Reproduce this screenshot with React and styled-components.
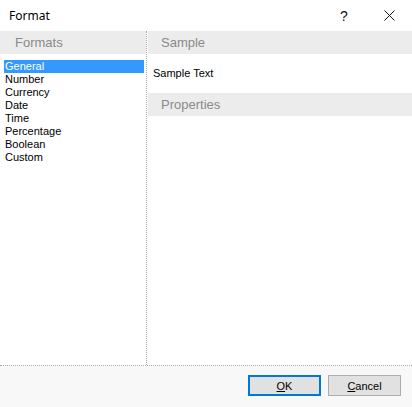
import React from "react";
import styled, { createGlobalStyle } from "styled-components";

const formats = ["General", "Number", "Currency", "Date", "Time", "Percentage", "Boolean", "Custom"];

const App = () => {
	return (
		<>
			<GlobalStyle />
			<Window>
				<TitleBar>
					<Title>Format</Title>
					<TitleButton>?</TitleButton>
					<TitleButton>
						<svg width="11" height="11" viewBox="0 0 11 11">
							<path d="M0.5 0.5 L10.5 10.5 M10.5 0.5 L0.5 10.5" stroke="#111" strokeWidth="1" />
						</svg>
					</TitleButton>
				</TitleBar>
				<Main>
					<LeftPane>
						<Header>Formats</Header>
						<FormatList>
							{formats.map((f, i) => (
								<FormatItem key={f} $selected={i === 0}>
									{f}
								</FormatItem>
							))}
						</FormatList>
					</LeftPane>
					<RightPane>
						<Header $right>Sample</Header>
						<SampleArea>Sample Text</SampleArea>
						<Header $right>Properties</Header>
					</RightPane>
				</Main>
				<Footer>
					<Button $default>
						<u>O</u>K
					</Button>
					<Button>
						<u>C</u>ancel
					</Button>
				</Footer>
			</Window>
		</>
	);
};

export default App;

const GlobalStyle = createGlobalStyle`
	body {
		margin: 0;
		background: #ffffff;
		font-family: "Liberation Sans", Arial, sans-serif;
	}
`;
const Window = styled.div`
	width: 412px;
	height: 407px;
	display: flex;
	flex-direction: column;
	background: #ffffff;
	overflow: hidden;
`;
const TitleBar = styled.div`
	height: 31px;
	display: flex;
	align-items: center;
	padding-left: 9px;
	box-sizing: border-box;
`;
const Title = styled.div`
	flex: 1;
	font-family: "Noto Sans", "Open Sans", sans-serif;
	font-size: 12px;
	color: #000000;
`;
const TitleButton = styled.div`
	width: 44px;
	height: 30px;
	display: flex;
	align-items: center;
	justify-content: center;
	font-family: "Liberation Sans", sans-serif;
	font-size: 14px;
	color: #111111;
	&:last-child {
		width: 46px;
	}
`;
const Main = styled.div`
	flex: 1;
	display: flex;
	border-bottom: 1px dotted #a8a8a8;
`;
const LeftPane = styled.div`
	width: 146px;
	border-right: 1px dotted #a8a8a8;
	display: flex;
	flex-direction: column;
`;
const RightPane = styled.div`
	flex: 1;
	display: flex;
	flex-direction: column;
	padding-left: 1px;
`;
const Header = styled.div`
	height: 23px;
	background: #ececec;
	color: #8a8a8a;
	font-size: 13px;
	line-height: 23px;
	padding-left: ${(p) => (p.$right ? "13px" : "15px")};
`;
const FormatList = styled.ul`
	list-style: none;
	margin: 0;
	padding: 6px 2px 0 4px;
`;
const FormatItem = styled.li`
	height: 13px;
	line-height: 13px;
	font-size: 11px;
	padding-left: 1px;
	color: ${(p) => (p.$selected ? "#ffffff" : "#000000")};
	background: ${(p) => (p.$selected ? "#3399ff" : "transparent")};
`;
const SampleArea = styled.div`
	height: 39px;
	display: flex;
	align-items: center;
	padding: 0 0 2px 5px;
	box-sizing: border-box;
	font-size: 11px;
	color: #000000;
`;
const Footer = styled.div`
	height: 41px;
	background: #f8f8f8;
	display: flex;
	justify-content: flex-end;
	align-items: flex-start;
	gap: 7px;
	padding: 9px 11px 0 0;
	box-sizing: border-box;
`;
const Button = styled.button`
	width: 73px;
	height: 21px;
	padding: 0;
	box-sizing: border-box;
	background: #e1e1e1;
	border: ${(p) => (p.$default ? "2px solid #0078d7" : "1px solid #adadad")};
	font-family: "Liberation Sans", Arial, sans-serif;
	font-size: 11px;
	color: #000000;
	u {
		text-decoration: underline;
	}
`;
